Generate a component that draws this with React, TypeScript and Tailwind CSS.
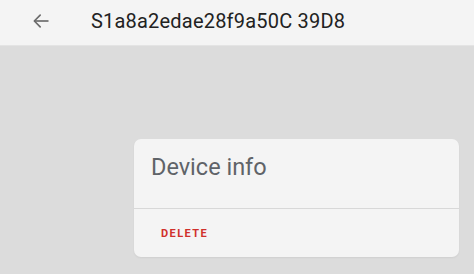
import React from "react";

export default function App() {
  return (
    <div className="w-[474px] h-[274px] bg-[#dcdcdc] flex flex-col overflow-hidden" style={{ fontFamily: "Roboto, 'Noto Sans', sans-serif" }}>
      <div className="h-[46px] bg-[#f4f4f4] flex items-center shrink-0 border-b border-[#e4e4e4]">
        <div className="w-[91px] flex items-center pl-[31px] pb-[4px]">
          <svg width="20" height="20" viewBox="0 0 24 24" fill="none" stroke="#6b6b6b" strokeWidth="2" strokeLinecap="square">
            <path d="M20 12H5" />
            <path d="M11 5l-7 7 7 7" strokeLinecap="round" strokeLinejoin="round" />
          </svg>
        </div>
        <div className="text-[20px] tracking-[0.2px] text-[#222] leading-none pb-[4px]">S1a8a2edae28f9a50C 39D8</div>
      </div>
      <div className="flex-1 flex justify-end pr-[15px] pt-[93px]">
        <div className="w-[325px] h-[118px] bg-[#f4f4f4] rounded-[7px] flex flex-col shadow-[0_1px_2px_rgba(0,0,0,0.06)]">
          <div className="h-[70px] border-b border-[#d8d8d8] pl-[17px] pt-[13px]">
            <div className="text-[23.5px] text-[#5f6368] leading-[30px]">Device info</div>
          </div>
          <div className="flex-1 flex items-center pl-[27px] pt-[2px]">
            <span className="text-[11px] font-bold tracking-[1.4px] text-[#d0302c]">DELETE</span>
          </div>
        </div>
      </div>
    </div>
  );
}
